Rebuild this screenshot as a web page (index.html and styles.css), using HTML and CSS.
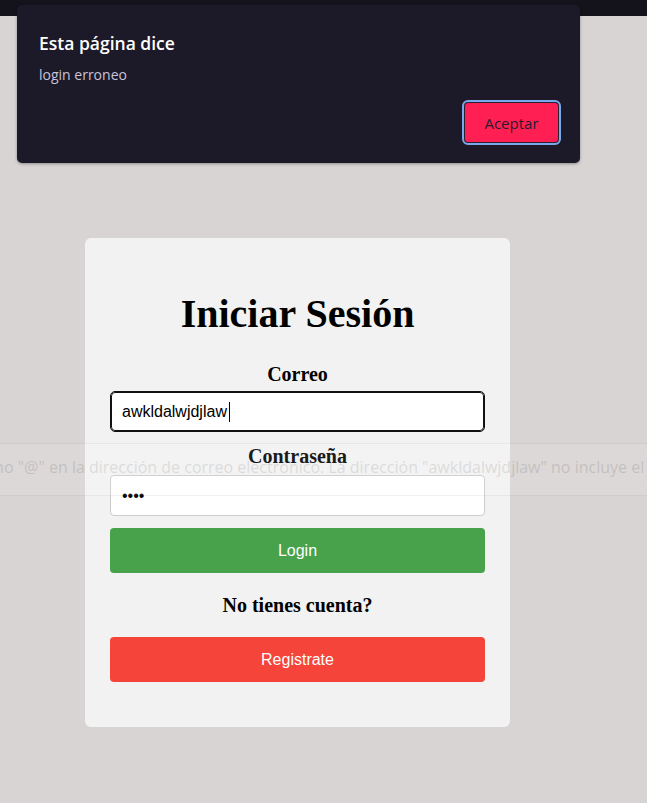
FILE: index.html
```html
<!DOCTYPE html>
<html lang="es">
<head>
<meta charset="utf-8">
<title>Iniciar Sesión</title>
<link rel="stylesheet" href="styles.css">
</head>
<body>
<div class="topbar"></div>

<main class="page">
  <form class="card">
    <h1 class="title">Iniciar Sesión</h1>
    <label class="label" for="correo">Correo</label>
    <div class="field-wrap">
      <input class="input input-focused" id="correo" type="text" value="awkldalwjdjlaw">
      <span class="caret"></span>
    </div>
    <label class="label label-pass" for="pass">Contraseña</label>
    <input class="input" id="pass" type="password" value="abcd">
    <button class="btn btn-login" type="button">Login</button>
    <p class="label question">No tienes cuenta?</p>
    <button class="btn btn-register" type="button">Registrate</button>
  </form>
</main>

<div class="tooltip">
  <span class="tooltip-arrow"></span>
  <span class="tooltip-text">Incluye un signo "@" en la dirección de correo electrónico. La dirección "awkldalwjdjlaw" no incluye el signo "@".</span>
</div>

<div class="dialog" role="alertdialog">
  <h2 class="dialog-title">Esta página dice</h2>
  <p class="dialog-msg">login erroneo</p>
  <div class="dialog-actions">
    <button class="dialog-btn" type="button">Aceptar</button>
  </div>
</div>
</body>
</html>
```

FILE: styles.css
```css
* { box-sizing: border-box; }

html, body {
  margin: 0;
  padding: 0;
}

body {
  background: #d8d4d3;
  min-height: 803px;
  font-family: "Liberation Serif", "Times New Roman", serif;
  overflow: hidden;
  position: relative;
}

.topbar {
  height: 16px;
  background: #14121b;
}

.page {
  padding: 222px 0 0 85px;
}

.card {
  width: 425px;
  background: #f2f2f2;
  border-radius: 6px;
  padding: 53px 25px 45px;
  display: flex;
  flex-direction: column;
  align-items: stretch;
  text-align: center;
}

.title {
  margin: 0 0 26px;
  font-size: 40px;
  line-height: 46px;
  font-weight: bold;
  color: #000;
}

.label {
  display: block;
  margin: 0 0 5px;
  font-size: 20px;
  line-height: 23px;
  font-weight: bold;
  color: #000;
}

.label-pass {
  margin-bottom: 7px;
}

.field-wrap {
  position: relative;
  margin-bottom: 13px;
}

.input {
  display: block;
  width: 100%;
  height: 41px;
  margin: 0;
  padding: 0 11px;
  border: 1px solid #cccccc;
  border-radius: 4px;
  background: #fff;
  font-family: "Liberation Sans", Arial, sans-serif;
  font-size: 16px;
  color: #000;
}

.input-focused {
  border-color: #111;
  outline: 1px solid #111;
  outline-offset: -2px;
  border-radius: 5px;
}

.caret {
  position: absolute;
  left: 119px;
  top: 11px;
  width: 1px;
  height: 20px;
  background: #000;
}

.btn {
  display: block;
  width: 100%;
  height: 45px;
  border: 0;
  border-radius: 4px;
  font-family: "Liberation Sans", Arial, sans-serif;
  font-size: 16px;
  color: #fff;
}

.btn-login {
  margin-top: 12px;
  background: #48a24c;
}

.question {
  margin: 21px 0 20px;
}

.btn-register {
  background: #f54439;
}

/* native validation bubble, shown faintly over the page */
.tooltip {
  position: absolute;
  left: -20px;
  top: 443px;
  width: 700px;
  height: 53px;
  background: #ffffff;
  border: 1px solid #8a8a8a;
  opacity: 0.1;
  font-family: "Open Sans", "Noto Sans", sans-serif;
  font-size: 16px;
  color: #111;
  white-space: nowrap;
  overflow: hidden;
}

.tooltip-arrow {
  position: absolute;
  left: 127px;
  top: -9px;
  width: 16px;
  height: 16px;
  background: #fff;
  border-left: 1px solid #8a8a8a;
  border-top: 1px solid #8a8a8a;
  transform: rotate(45deg);
}

.tooltip-text {
  position: absolute;
  left: -88px;
  top: 12px;
}

/* alert dialog */
.dialog {
  position: absolute;
  left: 17px;
  top: 5px;
  width: 563px;
  height: 158px;
  background: #1c1928;
  border-radius: 5px;
  box-shadow: 0 1px 3px rgba(0,0,0,0.35);
  padding: 26px 21px 0 22px;
  font-family: "Open Sans", "Noto Sans", sans-serif;
  display: flex;
  flex-direction: column;
}

.dialog-title {
  margin: 0;
  font-size: 17.5px;
  line-height: 24px;
  font-weight: 600;
  color: #ffffff;
}

.dialog-msg {
  margin: 10px 0 0;
  font-size: 14px;
  line-height: 20px;
  color: #c7c3da;
}

.dialog-actions {
  display: flex;
  justify-content: flex-end;
  margin-top: 17px;
}

.dialog-btn {
  width: 95px;
  height: 41px;
  margin: 0;
  background: #ff1f52;
  border: 1px solid #2a1f33;
  border-radius: 4px;
  outline: 2px solid #7aa9eb;
  outline-offset: 0;
  font-family: "Open Sans", "Noto Sans", sans-serif;
  font-size: 15px;
  color: #2b1b2e;
}
```
